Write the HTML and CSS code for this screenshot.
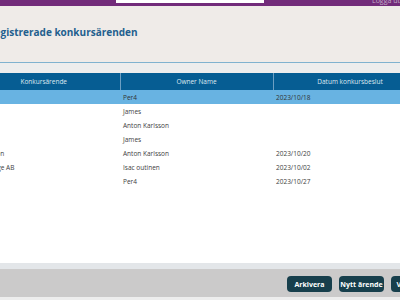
FILE: index.html
```html
<!DOCTYPE html>
<html lang="sv">
<head>
    <meta charset="UTF-8">
    <meta name="viewport" content="width=device-width, initial-scale=1.0">
    <title>Registrerade konkursärenden</title>
    <link rel="stylesheet" href="styles.css">
</head>
<body>
    <div class="sida">
        <div class="topp">
            <div class="sok"></div>
            <span class="logga-ut">Logga ut</span>
        </div>
        <div class="rubrik">
            <h1>Registrerade konkursärenden</h1>
        </div>
        <div class="band"></div>
        <div class="lista">
            <table>
                <colgroup>
                    <col class="k1">
                    <col class="k2">
                    <col class="k3">
                    <col>
                </colgroup>
                <thead>
                    <tr>
                        <th>Konkursärende</th>
                        <th>Owner Name</th>
                        <th>Datum konkursbeslut</th>
                        <th>Status</th>
                    </tr>
                </thead>
                <tbody>
                    <tr class="vald"><td>Test</td><td>Per4</td><td>2023/10/18</td><td></td></tr>
                    <tr><td></td><td>James</td><td></td><td></td></tr>
                    <tr><td></td><td>Anton Karlsson</td><td></td><td></td></tr>
                    <tr><td></td><td>James</td><td></td><td></td></tr>
                    <tr><td>Bo Jansson</td><td>Anton Karlsson</td><td>2023/10/20</td><td></td></tr>
                    <tr><td>Nordbygge AB</td><td>Isac outinen</td><td>2023/10/02</td><td></td></tr>
                    <tr><td></td><td>Per4</td><td>2023/10/27</td><td></td></tr>
                </tbody>
            </table>
        </div>
        <div class="band2"></div>
        <div class="fot">
            <button type="button">Arkivera</button>
            <button type="button">Nytt ärende</button>
            <button type="button">Visa arkiv</button>
        </div>
        <div class="botten"></div>
    </div>
</body>
</html>
```

FILE: styles.css
```css
body{
    margin: 0;
    overflow: hidden;
    background-color: #efebe8;
    font-family: "Open Sans", "DejaVu Sans", sans-serif;
}
.sida{
    width: 480px;
    margin-left: -32px;
    display: flex;
    flex-direction: column;
}
.topp{
    height: 6px;
    background-color: #722b7a;
    display: flex;
    align-items: flex-start;
}
.sok{
    width: 148px;
    height: 3px;
    margin-left: 148px;
    background-color: white;
}
.logga-ut{
    margin-left: 108px;
    margin-top: -3px;
    font-size: 7px;
    line-height: 7px;
    color: #c4b1c7;
}
.rubrik{
    height: 57px;
    display: flex;
    align-items: center;
    padding: 0 0 5px 20px;
    border-bottom: 1px solid #80b2cf;
    box-sizing: border-box;
}
h1{
    margin: 0;
    font-size: 10px;
    font-weight: bold;
    color: #235f8e;
}
.band{
    height: 10px;
    background-color: #ededed;
}
.lista{
    height: 190px;
    background-color: white;
}
table{
    border-collapse: collapse;
    table-layout: fixed;
    width: 480px;
    font-size: 6.5px;
}
.k1{ width: 152px; }
.k2{ width: 153px; }
.k3{ width: 154px; }
th{
    height: 17px;
    padding: 0;
    background-color: #065d93;
    color: #dfe9f1;
    font-weight: normal;
    border-left: 1px solid #6d9fc3;
}
th:first-child{
    border-left: none;
}
td{
    height: 14px;
    padding: 0 0 0 3px;
    color: #3d3d3d;
    white-space: nowrap;
    overflow: hidden;
}
.vald td{
    background-color: #68b3e2;
    color: #333;
}
.band2{
    height: 6px;
    background-color: #e3e6e9;
}
.fot{
    height: 28px;
    background-color: #cbcaca;
    display: flex;
    justify-content: flex-end;
    align-items: flex-start;
    padding: 7px 12px 0 0;
    box-sizing: border-box;
    gap: 7px;
}
button{
    width: 45px;
    height: 16px;
    padding: 0;
    border: none;
    border-radius: 4px;
    background-color: #173f4c;
    color: white;
    font-family: "Open Sans", sans-serif;
    font-weight: bold;
    font-size: 7px;
}
.botten{
    height: 10px;
    background-color: #ededed;
}
```
